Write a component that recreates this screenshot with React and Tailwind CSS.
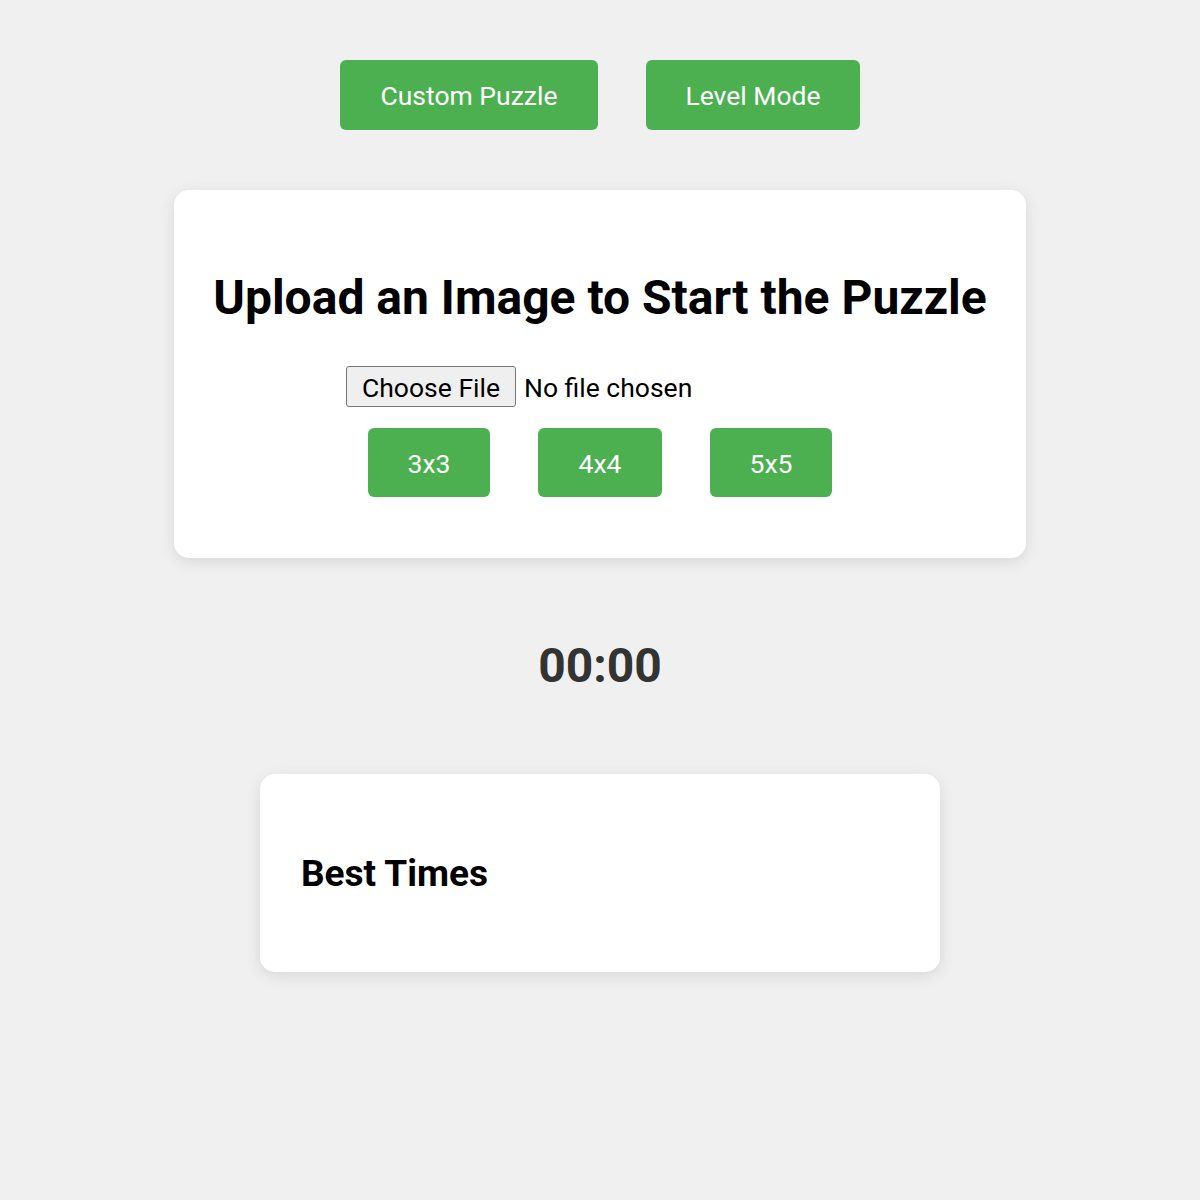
import React from 'react';

const green = "bg-[#4caf50] text-white rounded-[6px] flex items-center justify-center text-[26.5px] leading-none";

export default function App() {
    const sizes = [
        { label: '3x3', w: 'w-[122px]' },
        { label: '4x4', w: 'w-[124px]' },
        { label: '5x5', w: 'w-[122px]' },
    ];

    return (
        <div className="min-h-[1200px] bg-[#f0f0f0] font-['Roboto',sans-serif] text-black pt-[60px]">
            {/* mode switch */}
            <div className="flex justify-center gap-[48px]">
                <button className={`${green} w-[258px] h-[70px] pt-[2px]`}>Custom Puzzle</button>
                <button className={`${green} w-[214px] h-[70px] pt-[2px]`}>Level Mode</button>
            </div>

            {/* upload card */}
            <div className="mt-[60px] mx-auto w-[852px] bg-white rounded-[15px] shadow-[0_4px_15px_rgba(0,0,0,0.1)] pt-[80px] pb-[61px]">
                <h1 className="text-center text-[48px] leading-[56px] font-bold">Upload an Image to Start the Puzzle</h1>
                <div className="mt-[40px] mx-auto w-[508px] flex items-center">
                    <span className="h-[41px] w-[170px] pt-[3px] flex items-center justify-center bg-[#efefef] border border-[#767676] rounded-[3px] text-[26.5px] leading-none">Choose File</span>
                    <span className="ml-[8px] pt-[3px] text-[26.5px] leading-none">No file chosen</span>
                </div>
                <div className="mt-[21px] flex justify-center gap-[48px]">
                    {sizes.map((s) => (
                        <button key={s.label} className={`${green} ${s.w} h-[69px] pt-[3px]`}>{s.label}</button>
                    ))}
                </div>
            </div>

            {/* timer */}
            <div className="mt-[80px] text-center text-[48px] leading-[56px] font-bold text-[#333]">00:00</div>

            {/* best times */}
            <div className="mt-[80px] mx-auto w-[680px] h-[198px] bg-white rounded-[15px] shadow-[0_4px_15px_rgba(0,0,0,0.1)] flex items-center px-[41px]">
                <h2 className="text-[37px] leading-[42px] font-bold pt-[2px]">Best Times</h2>
            </div>
        </div>
    );
}
